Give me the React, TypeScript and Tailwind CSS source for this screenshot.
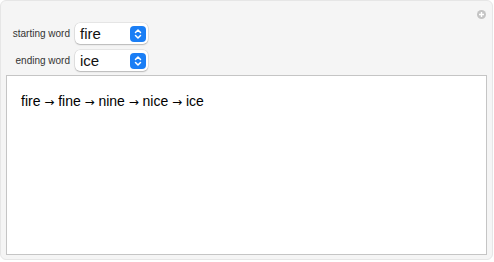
const Stepper = () => (
  <div className="w-4 h-4 rounded-[4px] bg-[#1a7ef5] flex items-center justify-center">
    <svg width="10" height="12" viewBox="0 0 10 12" fill="none">
      <path d="M2.5 4.5 L5 2 L7.5 4.5" stroke="white" strokeWidth="1.5" strokeLinecap="round" strokeLinejoin="round" />
      <path d="M2.5 7.5 L5 10 L7.5 7.5" stroke="white" strokeWidth="1.5" strokeLinecap="round" strokeLinejoin="round" />
    </svg>
  </div>
);

const Select = ({ value }: { value: string }) => (
  <div className="w-[73px] h-[21px] bg-white rounded-[5px] shadow-[0_0_0_0.5px_rgba(0,0,0,0.12),0_1px_1.5px_rgba(0,0,0,0.2)] flex items-center justify-between pl-[5px] pr-[2px]">
    <span className="text-[15px] text-[#111] leading-none">{value}</span>
    <Stepper />
  </div>
);

const words = ["fire", "fine", "nine", "nice", "ice"];

const App = () => {
  return (
    <div className="w-[494px] h-[262px] bg-white font-['Liberation_Sans',Arial,sans-serif] [font-variant-ligatures:none]">
      <div className="w-[493px] h-[260px] bg-[#f5f5f5] border border-[#e6e6e6] rounded-[6px] relative flex flex-col">
        <div className="absolute right-[6px] top-[9px] w-[9px] h-[9px] rounded-full bg-[#c4c4c4] flex items-center justify-center">
          <svg width="9" height="9" viewBox="0 0 9 9">
            <path d="M4.5 2 V7 M2 4.5 H7" stroke="white" strokeWidth="1.4" />
          </svg>
        </div>
        <div className="grid grid-cols-[63px_auto] gap-x-[5px] gap-y-[6px] items-center justify-start pl-[6px] pt-[22px]">
          <span className="text-[10px] text-[#333] text-right">starting word</span>
          <Select value="fire" />
          <span className="text-[10px] text-[#333] text-right">ending word</span>
          <Select value="ice" />
        </div>
        <div className="mx-[5px] mt-[4px] h-[180px] bg-white border border-[#c5c5c5] pl-[14px] pt-[13px]">
          <span className="text-[14px] text-black">
            {words.map((w, i) => (
              <span key={w}>
                {i > 0 && <span className="font-['DejaVu_Sans'] text-[12px]"> → </span>}
                {w}
              </span>
            ))}
          </span>
        </div>
      </div>
    </div>
  );
};

export default App;
